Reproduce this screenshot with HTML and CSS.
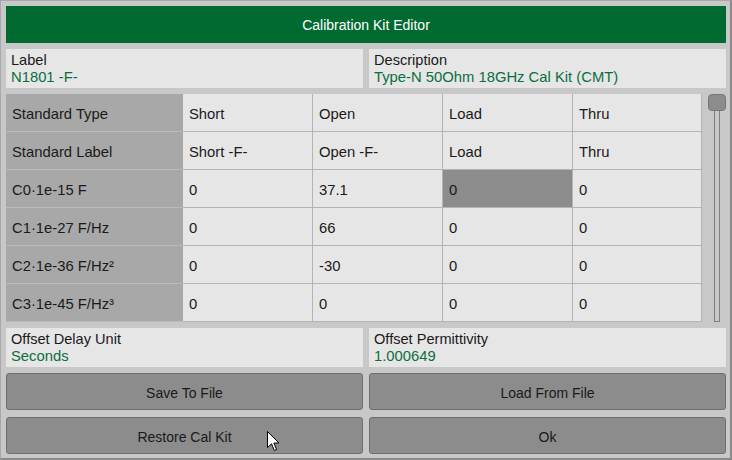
FILE: index.html
```html
<!DOCTYPE html>
<html>
<head>
  <title>Calibration Kit Editor</title>
  <link rel="stylesheet" href="styles.css">
</head>
<body>
  <div class="window">
    <div class="title">Calibration Kit Editor</div>

    <div class="fields">
      <div class="field">
        <div class="field-name">Label</div>
        <div class="field-value">N1801 -F-</div>
      </div>
      <div class="field">
        <div class="field-name">Description</div>
        <div class="field-value">Type-N 50Ohm 18GHz Cal Kit (CMT)</div>
      </div>
    </div>

    <div class="table-area">
      <div class="grid">
        <div class="cell head">Standard Type</div>
        <div class="cell">Short</div>
        <div class="cell">Open</div>
        <div class="cell">Load</div>
        <div class="cell">Thru</div>

        <div class="cell head">Standard Label</div>
        <div class="cell">Short -F-</div>
        <div class="cell">Open -F-</div>
        <div class="cell">Load</div>
        <div class="cell">Thru</div>

        <div class="cell head">C0·1e-15 F</div>
        <div class="cell">0</div>
        <div class="cell">37.1</div>
        <div class="cell selected">0</div>
        <div class="cell">0</div>

        <div class="cell head">C1·1e-27 F/Hz</div>
        <div class="cell">0</div>
        <div class="cell">66</div>
        <div class="cell">0</div>
        <div class="cell">0</div>

        <div class="cell head">C2·1e-36 F/Hz²</div>
        <div class="cell">0</div>
        <div class="cell">-30</div>
        <div class="cell">0</div>
        <div class="cell">0</div>

        <div class="cell head">C3·1e-45 F/Hz³</div>
        <div class="cell">0</div>
        <div class="cell">0</div>
        <div class="cell">0</div>
        <div class="cell">0</div>
      </div>

      <div class="scrollbar">
        <div class="thumb"></div>
        <div class="track"></div>
      </div>
    </div>

    <div class="fields">
      <div class="field">
        <div class="field-name">Offset Delay Unit</div>
        <div class="field-value">Seconds</div>
      </div>
      <div class="field">
        <div class="field-name">Offset Permittivity</div>
        <div class="field-value">1.000649</div>
      </div>
    </div>

    <div class="buttons">
      <button class="btn">Save To File</button>
      <button class="btn">Load From File</button>
      <button class="btn">Restore Cal Kit</button>
      <button class="btn">Ok</button>
    </div>

    <!-- mouse pointer sitting over the Restore button -->
    <svg class="pointer" width="13" height="21" viewBox="0 0 13 21">
      <path d="M0.5 0.5 L0.5 16.5 L4.5 12.8 L7.3 19.5 L9.6 18.5 L6.9 12 L12 12 Z" fill="#fff" stroke="#000" stroke-width="1" stroke-linejoin="miter"/>
    </svg>
  </div>
</body>
</html>
```

FILE: styles.css
```css
body {
  margin: 0;
  font-family: "Liberation Sans", Arial, sans-serif;
  font-size: 14px;
  color: #1a1a1a;
}

.window {
  position: relative;
  width: 732px;
  height: 460px;
  box-sizing: border-box;
  background-color: #c8c8c8;
  border-left: 1px solid #a8a8a8;
  border-top: 1px solid #a8a8a8;
  border-right: 2px solid #8a8a8a;
  border-bottom: 2px solid #8a8a8a;
  padding: 5px 4px 0 5px;
  display: flex;
  flex-direction: column;
  gap: 6px;
}

.title {
  height: 37px;
  background-color: #006a31;
  color: #fff;
  display: flex;
  align-items: center;
  justify-content: center;
  font-size: 14px;
}

.fields {
  display: grid;
  grid-template-columns: 357px 357px;
  gap: 6px;
}

.field {
  height: 39px;
  box-sizing: border-box;
  background-color: #e6e6e6;
  padding: 3px 5px 0 5px;
  line-height: 17px;
  font-size: 14.6px;
}

.field-value {
  color: #0b6e40;
  font-size: 14.8px;
}

.table-area {
  display: flex;
  height: 228px;
}

.grid {
  display: grid;
  grid-template-columns: 177px 130px 130px 130px 129px;
  grid-auto-rows: 38px;
  width: 696px;
}

.cell {
  box-sizing: border-box;
  background-color: #e6e6e6;
  border-right: 1px solid #b4b4b4;
  border-bottom: 1px solid #b4b4b4;
  padding: 2px 0 0 6px;
  display: flex;
  align-items: center;
  font-size: 14.8px;
}

.cell.head {
  background-color: #a8a8a8;
  border-right: none;
  border-bottom-color: #bababa;
}

.cell.selected {
  background-color: #8c8c8c;
}

.scrollbar {
  width: 24px;
  display: flex;
  flex-direction: column;
  align-items: flex-end;
}

.thumb {
  width: 18px;
  height: 17px;
  box-sizing: border-box;
  background-color: #8c8c8c;
  border: 1px solid #767676;
  border-radius: 4px;
}

.track {
  width: 6px;
  flex: 1;
  box-sizing: border-box;
  margin-right: 6px;
  border: 1px solid #7e7e7e;
  border-top: none;
}

.buttons {
  display: grid;
  grid-template-columns: 357px 357px;
  grid-auto-rows: 37px;
  column-gap: 6px;
  row-gap: 7px;
}

.btn {
  background-color: #8c8c8c;
  border: 1px solid #6e6e6e;
  border-radius: 3px;
  font-family: "Liberation Sans", Arial, sans-serif;
  font-size: 14px;
  color: #1a1a1a;
  padding: 2px 0 0 0;
}

.pointer {
  position: absolute;
  left: 266px;
  top: 430px;
}
```
